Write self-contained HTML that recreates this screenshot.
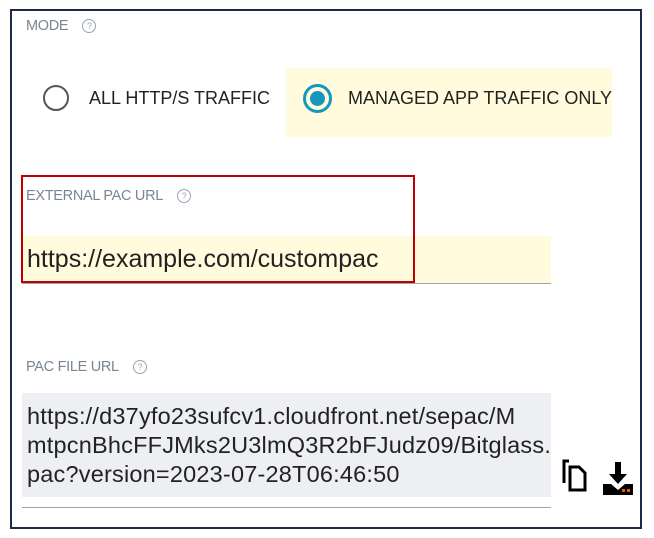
<!DOCTYPE html>
<html><head><style>
body{margin:0;width:654px;height:538px;background:#fff;font-family:"Liberation Sans",sans-serif;position:relative;overflow:hidden}
.abs{position:absolute}
.frame{left:10px;top:9px;width:628px;height:516px;border:2px solid #1c2b45}
.lbl{font-size:14.5px;color:#7a8593;letter-spacing:-0.3px}
.q{display:inline-block;width:12px;height:12px;border:1px solid #9aa3ad;border-radius:50%;font-size:9px;line-height:12px;text-align:center;color:#9aa3ad;vertical-align:1px;margin-left:14px}
.rt{font-size:18px;color:#222}
</style></head><body>
<div class="abs frame"></div>
<div class="abs lbl" style="left:26px;top:18px">MODE<span class="q">?</span></div>
<div class="abs" style="left:286px;top:68px;width:326px;height:69px;background:#fffbdc"></div>
<div class="abs" style="left:43px;top:85px;width:26px;height:26px;border:2.5px solid #555;border-radius:50%;box-sizing:border-box"></div>
<div class="abs rt" style="left:89px;top:88px">ALL HTTP/S TRAFFIC</div>
<div class="abs" style="left:303px;top:84px;width:29px;height:29px;border:3px solid #1797c0;border-radius:50%;box-sizing:border-box"><div style="margin:4px;width:15px;height:15px;background:#1797c0;border-radius:50%"></div></div>
<div class="abs rt" style="left:348px;top:88px">MANAGED APP TRAFFIC ONLY</div>
<div class="abs" style="left:22px;top:236px;width:529px;height:47px;background:#fffbdc;border-bottom:1px solid #9aa6b2"></div>
<div class="abs" style="left:21px;top:175px;width:390px;height:104px;border:2px solid #c00000"></div>
<div class="abs lbl" style="left:26px;top:188px">EXTERNAL PAC URL<span class="q">?</span></div>
<div class="abs" style="left:27px;top:245px;font-size:25px;color:#222">https://example.com/custompac</div>
<div class="abs lbl" style="left:26px;top:359px">PAC FILE URL<span class="q">?</span></div>
<div class="abs" style="left:22px;top:393px;width:529px;height:104px;background:#edeff2"></div>
<div class="abs" style="left:22px;top:507px;width:529px;height:1px;background:#9aa6b2"></div>
<div class="abs" style="left:27px;top:402px;font-size:23.5px;line-height:29px;color:#222;white-space:nowrap;letter-spacing:0.2px">https://d37yfo23sufcv1.cloudfront.net/sepac/M<br>mtpcnBhcFFJMks2U3lmQ3R2bFJudz09/Bitglass.<br>pac?version=2023-07-28T06:46:50</div>
<svg class="abs" style="left:561px;top:458px" width="32" height="36" viewBox="0 0 32 36"><path d="M8 3H3v22" fill="none" stroke="#000" stroke-width="3"/><path d="M9 9h9l6 6v17H9z" fill="none" stroke="#000" stroke-width="3"/></svg>
<svg class="abs" style="left:600px;top:460px" width="36" height="36" viewBox="0 0 36 36"><path d="M15 2h6v12h6l-9 10-9-10h6z" fill="#000"/><path d="M3 24h8l7 6 7-6h8v11H3z" fill="#000"/><rect x="22" y="29" width="3" height="3" fill="#e85c00"/><rect x="27" y="29" width="3" height="3" fill="#e85c00"/></svg>
</body></html>
